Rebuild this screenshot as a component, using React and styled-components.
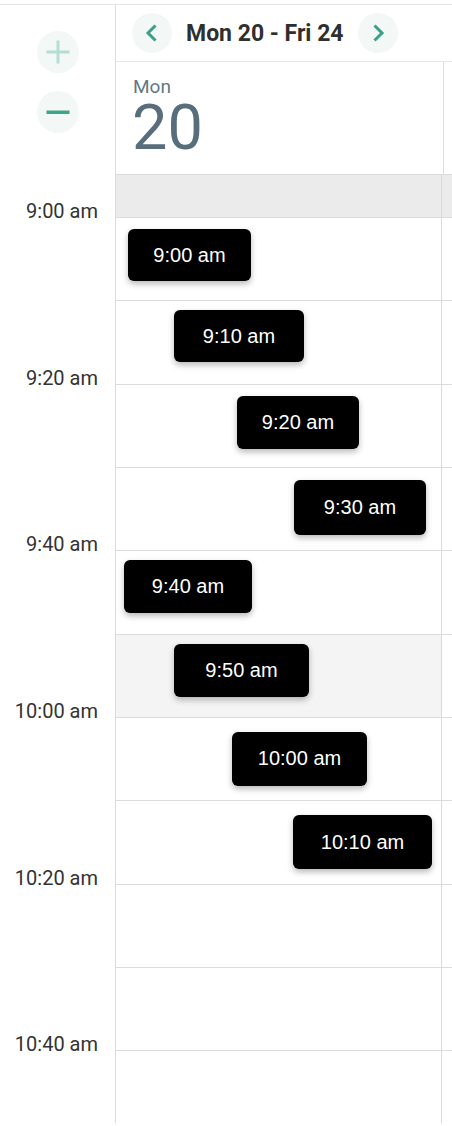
import React from "react";
import styled, { createGlobalStyle } from "styled-components";

const Global = createGlobalStyle`
  html, body { margin: 0; padding: 0; background: #fff; }
  body { font-family: Roboto, "Noto Sans", sans-serif; }
  * { box-sizing: border-box; }
`;

const Frame = styled.div`
  height: 1123px;
  overflow: hidden;
  padding-top: 4px;
`;

const Calendar = styled.div`
  border-top: 1px solid #e4e4e4;
  display: grid;
  grid-template-columns: 116px 1fr;
`;

const Gutter = styled.div`
  border-right: 1px solid #dcdcdc;
`;

const ZoomControls = styled(Gutter)`
  display: flex;
  flex-direction: column;
  align-items: center;
  padding-top: 26px;
  gap: 18px;
`;

const RoundButton = styled.button`
  width: ${(p) => p.$size}px;
  height: ${(p) => p.$size}px;
  border-radius: 50%;
  border: none;
  padding: 0;
  margin: 0;
  background: #f3f7f6;
  color: ${(p) => (p.$disabled ? "#b5ddd1" : "#3fa58a")};
  display: flex;
  align-items: center;
  justify-content: center;
  cursor: pointer;
  flex: none;
`;

const HeadPane = styled.div`
  display: flex;
  flex-direction: column;
  min-width: 0;
`;

const NavBar = styled.div`
  height: 57px;
  border-bottom: 1px solid #e3e8eb;
  display: flex;
  align-items: center;
  padding-left: 16px;
  gap: 14px;
`;

const RangeTitle = styled.div`
  font-family: Roboto, sans-serif;
  font-weight: 700;
  font-size: 23px;
  color: #2f2f2f;
  line-height: 1;
  padding-top: 1px;
`;

const DayHeadRow = styled.div`
  display: flex;
  height: 112px;
`;

const DayHead = styled.div`
  width: 328px;
  flex: none;
  border-right: 1px solid #dedede;
  padding: 14px 0 0 17px;
  display: flex;
  flex-direction: column;
`;

const DayName = styled.div`
  font-size: 19px;
  line-height: 22px;
  color: #627885;
`;

const DayNumber = styled.div`
  font-size: 63px;
  line-height: 56px;
  margin-top: 2px;
  color: #586e7c;
  margin-left: -1px;
`;

const AllDayRow = styled.div`
  display: flex;
  height: 43px;
  border-top: 1px solid #dcdcdc;
  background: #ebebeb;
`;

const AllDayCell = styled.div`
  width: 326px;
  flex: none;
  border-right: 1px solid #d9d9d9;
`;

const TimeLabelCell = styled(Gutter)`
  height: 83.333px;
  display: flex;
  justify-content: flex-end;
  align-items: flex-start;
  padding-right: 17px;
  border-right-color: #d9d9d9;
`;

const TimeLabel = styled.span`
  font-size: 20px;
  line-height: 20px;
  color: #333;
  margin-top: -16px;
  white-space: nowrap;
`;

const SlotRow = styled.div`
  display: flex;
  height: 83.333px;
  border-top: 1px solid #dcdcdc;
  min-width: 0;
`;

const DayCell = styled.div`
  position: relative;
  width: 326px;
  flex: none;
  border-right: 1px solid #d9d9d9;
  background: ${(p) => (p.$shaded ? "#f4f4f4" : "#fff")};
`;

const NextDayCell = styled.div`
  flex: 1;
`;

const Event = styled.div`
  position: absolute;
  background: #000;
  color: #fff;
  border-radius: 6px;
  box-shadow: 0 3px 6px rgba(0, 0, 0, 0.28);
  display: flex;
  align-items: center;
  justify-content: center;
  font-family: "Liberation Sans", Arial, sans-serif;
  font-size: 20px;
  white-space: nowrap;
`;

const Chevron = ({ dir }) => (
  <svg width="16" height="20" viewBox="0 0 16 20" fill="none">
    <polyline
      points={dir === "left" ? "11.5,2.5 4,10 11.5,17.5" : "4.5,2.5 12,10 4.5,17.5"}
      stroke="#3d9f87"
      strokeWidth="3"
      strokeLinejoin="miter"
    />
  </svg>
);

const PlusIcon = () => (
  <svg width="24" height="24" viewBox="0 0 24 24">
    <rect x="0.5" y="10.5" width="23" height="3" fill="currentColor" />
    <rect x="10.5" y="0.5" width="3" height="23" fill="currentColor" />
  </svg>
);

const MinusIcon = () => (
  <svg width="24" height="24" viewBox="0 0 24 24">
    <rect x="0.5" y="10.5" width="23" height="3.5" fill="currentColor" />
  </svg>
);

const rows = [
  { label: "9:00 am", event: { text: "9:00 am", left: 12, top: 11, width: 123, height: 52 } },
  { label: null, event: { text: "9:10 am", left: 58, top: 9, width: 130, height: 52 } },
  { label: "9:20 am", event: { text: "9:20 am", left: 121, top: 11, width: 122, height: 53 } },
  { label: null, event: { text: "9:30 am", left: 178, top: 12, width: 132, height: 55 } },
  { label: "9:40 am", event: { text: "9:40 am", left: 8, top: 9, width: 128, height: 53 } },
  { label: null, shaded: true, event: { text: "9:50 am", left: 58, top: 9, width: 135, height: 53 } },
  { label: "10:00 am", event: { text: "10:00 am", left: 116, top: 14, width: 135, height: 54 } },
  { label: null, event: { text: "10:10 am", left: 177, top: 14, width: 139, height: 54 } },
  { label: "10:20 am" },
  { label: null },
  { label: "10:40 am" },
  { label: null },
];

export default function App() {
  return (
    <>
      <Global />
      <Frame>
        <Calendar>
          <ZoomControls>
            <RoundButton $size={42} $disabled aria-label="Zoom in">
              <PlusIcon />
            </RoundButton>
            <RoundButton $size={42} aria-label="Zoom out">
              <MinusIcon />
            </RoundButton>
          </ZoomControls>
          <HeadPane>
            <NavBar>
              <RoundButton $size={40} aria-label="Previous week">
                <Chevron dir="left" />
              </RoundButton>
              <RangeTitle>Mon 20 - Fri 24</RangeTitle>
              <RoundButton $size={40} aria-label="Next week">
                <Chevron dir="right" />
              </RoundButton>
            </NavBar>
            <DayHeadRow>
              <DayHead>
                <DayName>Mon</DayName>
                <DayNumber>20</DayNumber>
              </DayHead>
            </DayHeadRow>
            <AllDayRow>
              <AllDayCell />
            </AllDayRow>
          </HeadPane>

          {rows.map((r, i) => (
            <React.Fragment key={i}>
              <TimeLabelCell>{r.label && <TimeLabel>{r.label}</TimeLabel>}</TimeLabelCell>
              <SlotRow>
                <DayCell $shaded={r.shaded}>
                  {r.event && (
                    <Event
                      style={{
                        left: r.event.left,
                        top: r.event.top,
                        width: r.event.width,
                        height: r.event.height,
                      }}
                    >
                      {r.event.text}
                    </Event>
                  )}
                </DayCell>
                <NextDayCell />
              </SlotRow>
            </React.Fragment>
          ))}
        </Calendar>
      </Frame>
    </>
  );
}
